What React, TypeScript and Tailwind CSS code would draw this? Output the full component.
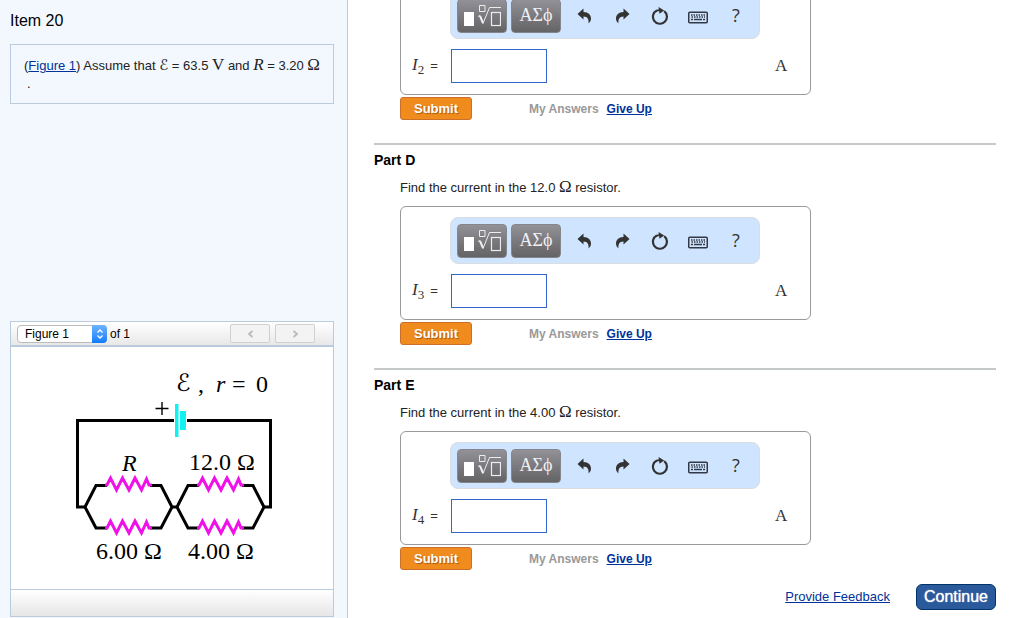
import React from "react";

const serif = "font-['Liberation_Serif',serif]";

function MathText({ children, italic = false }: { children: React.ReactNode; italic?: boolean }) {
  return (
    <span className={`${serif} text-[17px] leading-none ${italic ? "italic" : ""}`}>{children}</span>
  );
}

function TemplateIcon() {
  return (
    <svg width="38" height="24" viewBox="0 0 38 24" fill="none" stroke="#ededf0" aria-hidden="true">
      <rect x="1" y="8" width="10" height="14" fill="#fff" stroke="none" />
      <path d="M16.500 1.500h5.500v6h-5.500zM15 12.500l2-1L20 19.500L26.500 3.500H38" />
      <path d="M17 12l3 7" strokeWidth="2" />
      <rect x="28.500" y="8.500" width="9" height="13" strokeWidth="1.200" />
    </svg>
  );
}

function BackIcon() {
  return (
    <svg width="15" height="16" viewBox="0 0 15 16" fill="#333" aria-hidden="true">
      <path d="M0.500 6L6.500 0.500V4C11.500 4 14 7 14 10.500C14 12.500 13.200 14 11.500 15.500C12 12 11 8.500 6.500 8.500V11.500Z" />
    </svg>
  );
}

function ForwardIcon() {
  return (
    <svg width="15" height="16" viewBox="0 0 15 16" fill="#333" aria-hidden="true">
      <path d="M14.500 6L8.500 0.500V4C3.500 4 1 7 1 10.500C1 12.500 1.800 14 3.500 15.500C3 12 4 8.500 8.500 8.500V11.500Z" />
    </svg>
  );
}

function ResetIcon() {
  return (
    <svg width="18" height="18" viewBox="0 0 18 18" fill="none" aria-hidden="true">
      <path d="M5.800 3.500A7 7 0 1 0 13.200 4.200" stroke="#333" strokeWidth="2.200" />
      <path d="M7.500 0L13.200 3.500L8.500 6.800Z" fill="#333" />
      <path d="M5.200 3.900L9 2.900" stroke="#333" strokeWidth="2" />
    </svg>
  );
}

function KeyboardIcon() {
  return (
    <svg width="20" height="13" viewBox="0 0 20 13" fill="none" stroke="#333847" aria-hidden="true">
      <rect x="0.750" y="1.250" width="18.500" height="10.500" rx="1" strokeWidth="1.500" />
      <path d="M3 4h14M3.500 6h13.500" strokeWidth="1.300" strokeDasharray="1.500 1" />
      <path d="M3 8.500h2M6 8.500h8M15 8.500h2" strokeWidth="1.500" />
    </svg>
  );
}

const toolButton =
  "flex h-[34px] w-[50px] items-center justify-center rounded-[4px] border border-[#85858c] bg-linear-to-b from-[#919197] to-[#646466] text-[#f0f0f4]";
const iconButton = "flex h-7 w-[38px] items-center justify-center";

function AnswerBlock({ index }: { index: number }) {
  const id = `current-${index}`;
  return (
    <form onSubmit={(e) => e.preventDefault()} className="ml-[26px]">
      <div className="max-w-[411px] rounded-[6px] border border-[#999] pt-[10px] pb-[11px]">
        <div className="ml-[49px] flex h-[47px] w-[310px] items-center rounded-[8px] border border-[#d9dde2] bg-[#cfe5ff] pl-[6px]">
          <button type="button" aria-label="Templates" className={`${toolButton} mr-1`}>
            <TemplateIcon />
          </button>
          <button type="button" aria-label="Greek symbols" className={`${toolButton} ${serif} text-[18px]`}>
            ΑΣϕ
          </button>
          <div className="ml-1 flex items-center text-[#333]">
            <button type="button" aria-label="Undo" className={iconButton}><BackIcon /></button>
            <button type="button" aria-label="Redo" className={iconButton}><ForwardIcon /></button>
            <button type="button" aria-label="Reset" className={iconButton}><ResetIcon /></button>
            <button type="button" aria-label="Keyboard shortcuts" className={`${iconButton} pt-1`}><KeyboardIcon /></button>
            <button type="button" aria-label="Help" className={`${iconButton} font-['Open_Sans',sans-serif] text-[18px]`}>?</button>
          </div>
        </div>
        <div className="mt-[10px] flex items-center">
          <label htmlFor={id} className="w-[50px] pl-[11px] text-[13px] whitespace-nowrap text-[#333]">
            <MathText italic>I</MathText>
            <sub className={`${serif} text-[13px]`}>{index}</sub>
            <span className="ml-[6px]">=</span>
          </label>
          <input id={id} type="text" className="h-[34px] w-24 border border-[#36c] bg-white px-2 text-[13px] outline-none" />
          <span className="ml-[228px] text-[#333]"><MathText>A</MathText></span>
        </div>
      </div>
      <div className="mt-[2px] flex h-[23px] items-center text-[12px] font-bold">
        <button type="submit" className="h-[23px] w-[72px] rounded-[3px] border border-[#cc6f2b] bg-[#f08c1e] text-[13px] text-white text-shadow-[1px_1px_1px_#a65810]">
          Submit
        </button>
        <span className="ml-[57px] text-[#999]">My Answers</span>
        <a href="#give-up" className="ml-2 text-[#039] underline">Give Up</a>
      </div>
    </form>
  );
}

function Part({ letter, resistance, index }: { letter: string; resistance: string; index: number }) {
  return (
    <section className="mt-[23px] border-t-2 border-[#c5cac8]">
      <h2 className="mt-[5px] text-[14px] leading-5 font-bold">Part {letter}</h2>
      <p className="mt-2 mb-[8px] ml-[26px] h-5 text-[13px] leading-5 text-[#222]">
        Find the current in the {resistance} <MathText>Ω</MathText> resistor.
      </p>
      <AnswerBlock index={index} />
    </section>
  );
}

const zigzags = [
  { x: 105, y: 485 },
  { x: 197, y: 485 },
  { x: 105, y: 528 },
  { x: 197, y: 528 },
];

function Circuit() {
  return (
    <svg viewBox="11 347 322 242" className="block h-[242px] w-full" role="img" aria-label="Circuit diagram">
      <g fill="none" stroke="#000" strokeWidth="3">
        <path d="M174 420.500H77.500V507H85M187 420.500H270.500V507H264" />
        <path d="M107 485.500H96L85 507L96 528H107M150 485.500H161L172 507L161 528H150M172 507H177M199 485.500H188L177 507L188 528H199M242 485.500H253L264 507L253 528H242" />
      </g>
      <g fill="none" stroke="#f010e8" strokeWidth="3">
        {zigzags.map(({ x, y }) => (
          <path key={`${x}-${y}`} d="M0 0H2L5.500 -7L11.500 5L17.500 -7L24 5L30 -7L36.500 5L41.500 -6L44 0H47" transform={`translate(${x} ${y})`} />
        ))}
      </g>
      <path d="M175 404h3.500v33H175zM180 411h6v19h-6z" fill="#11f1f1" />
      <path d="M155.500 408.500h13M162 402v13" stroke="#000" strokeWidth="1.400" />
      <g className={`${serif} text-[24px]`} fill="#000">
        <text x="176" y="391" className="font-['DejaVu_Serif','DejaVu_Sans',serif] text-[24px] italic">ℰ</text>
        <text x="198" y="392">,</text>
        <text x="216" y="392" className="italic">r</text>
        <text x="232" y="392">=</text>
        <text x="256" y="392">0</text>
        <text x="122" y="471" className="italic">R</text>
        <text x="189" y="470">12.0 Ω</text>
        <text x="96" y="559">6.00 Ω</text>
        <text x="188" y="559">4.00 Ω</text>
      </g>
    </svg>
  );
}

function FigurePanel() {
  const pager = "flex h-[19px] w-10 items-center justify-center rounded-[2px] border border-[#d0d0d0] bg-[#f3f3f3]";
  return (
    <section className="border border-[#b9cbdd] bg-white">
      <div className="flex h-[25px] items-center border-b-2 border-[#b9cbdd] bg-linear-to-b from-white to-[#e8e8e8] pl-[6px] pr-[18px] text-[12px]">
        <div className="relative">
          <select aria-label="Figure" className="block h-[18px] w-[90px] appearance-none rounded-[4px] border border-[#bbb] bg-white pl-[7px] text-[12px] leading-4">
            <option>Figure 1</option>
          </select>
          <span className="pointer-events-none absolute top-0 right-0 flex h-[18px] w-[15px] items-center justify-center rounded-r-[4px] bg-linear-to-b from-[#6cb3fa] to-[#087bfe]">
            <svg width="8" height="12" viewBox="0 0 8 12" fill="none" stroke="#fff" strokeWidth="1.300" aria-hidden="true">
              <path d="M1.500 4.500L4 2L6.500 4.500M1.500 7.500L4 10L6.500 7.500" />
            </svg>
          </span>
        </div>
        <span className="ml-[3px] flex-1">of 1</span>
        <div className="flex gap-[5px]">
          <button type="button" aria-label="Previous figure" className={pager}>
            <svg width="7" height="8" viewBox="0 0 7 8" fill="none" stroke="#bbb" strokeWidth="1.800"><path d="M5.500 1L2 4L5.500 7" /></svg>
          </button>
          <button type="button" aria-label="Next figure" className={pager}>
            <svg width="7" height="8" viewBox="0 0 7 8" fill="none" stroke="#bbb" strokeWidth="1.800"><path d="M1.500 1L5 4L1.500 7" /></svg>
          </button>
        </div>
      </div>
      <Circuit />
      <div className="h-[27px] border-t border-[#b9cbdd] bg-linear-to-b from-white to-[#e6e6e6]" />
    </section>
  );
}

export default function App() {
  return (
    <div className="flex h-screen overflow-hidden bg-white font-['Liberation_Sans',Arial,sans-serif] text-black">
      <aside className="flex w-[348px] shrink-0 flex-col justify-between border-r border-[#b9cbdd] bg-[#f3f8ff] pr-[13px] pb-px pl-[10px]">
        <div>
          <h1 className="mt-[9px] text-[16px] leading-6">Item 20</h1>
          <div className="mt-[11px] h-[60px] border border-[#b9cbdd] pt-[11px] pl-[13px] text-[13px] leading-5 text-[#222]">
            <p className="h-5 whitespace-nowrap">
              (<a href="#figure" className="text-[#039] underline">Figure 1</a>) Assume that{" "}
              <span className="font-['DejaVu_Serif','DejaVu_Sans',serif] text-[15px] leading-none italic">ℰ</span> = 63.5 <MathText>V</MathText> and{" "}
              <MathText italic>R</MathText> = 3.20 <MathText>Ω</MathText>
            </p>
            <p className="h-5 pl-[3px] leading-4">.</p>
          </div>
        </div>
        <FigurePanel />
      </aside>
      <main className="min-w-0 flex-1 pr-[18px] pl-[26px]">
        <div className="-mt-[19px]">
          <AnswerBlock index={2} />
        </div>
        <Part letter="D" resistance="12.0" index={3} />
        <Part letter="E" resistance="4.00" index={4} />
        <div className="mt-[14px] flex items-center justify-end gap-[26px]">
          <a href="#feedback" className="text-[13px] text-[#039] underline">Provide Feedback</a>
          <button type="button" className="h-[26px] w-20 rounded-[6px] border border-[#003366] bg-[#2b5a9c] text-[16px] leading-6 text-white text-shadow-[0_0_1px_#fff]">
            Continue
          </button>
        </div>
      </main>
    </div>
  );
}
